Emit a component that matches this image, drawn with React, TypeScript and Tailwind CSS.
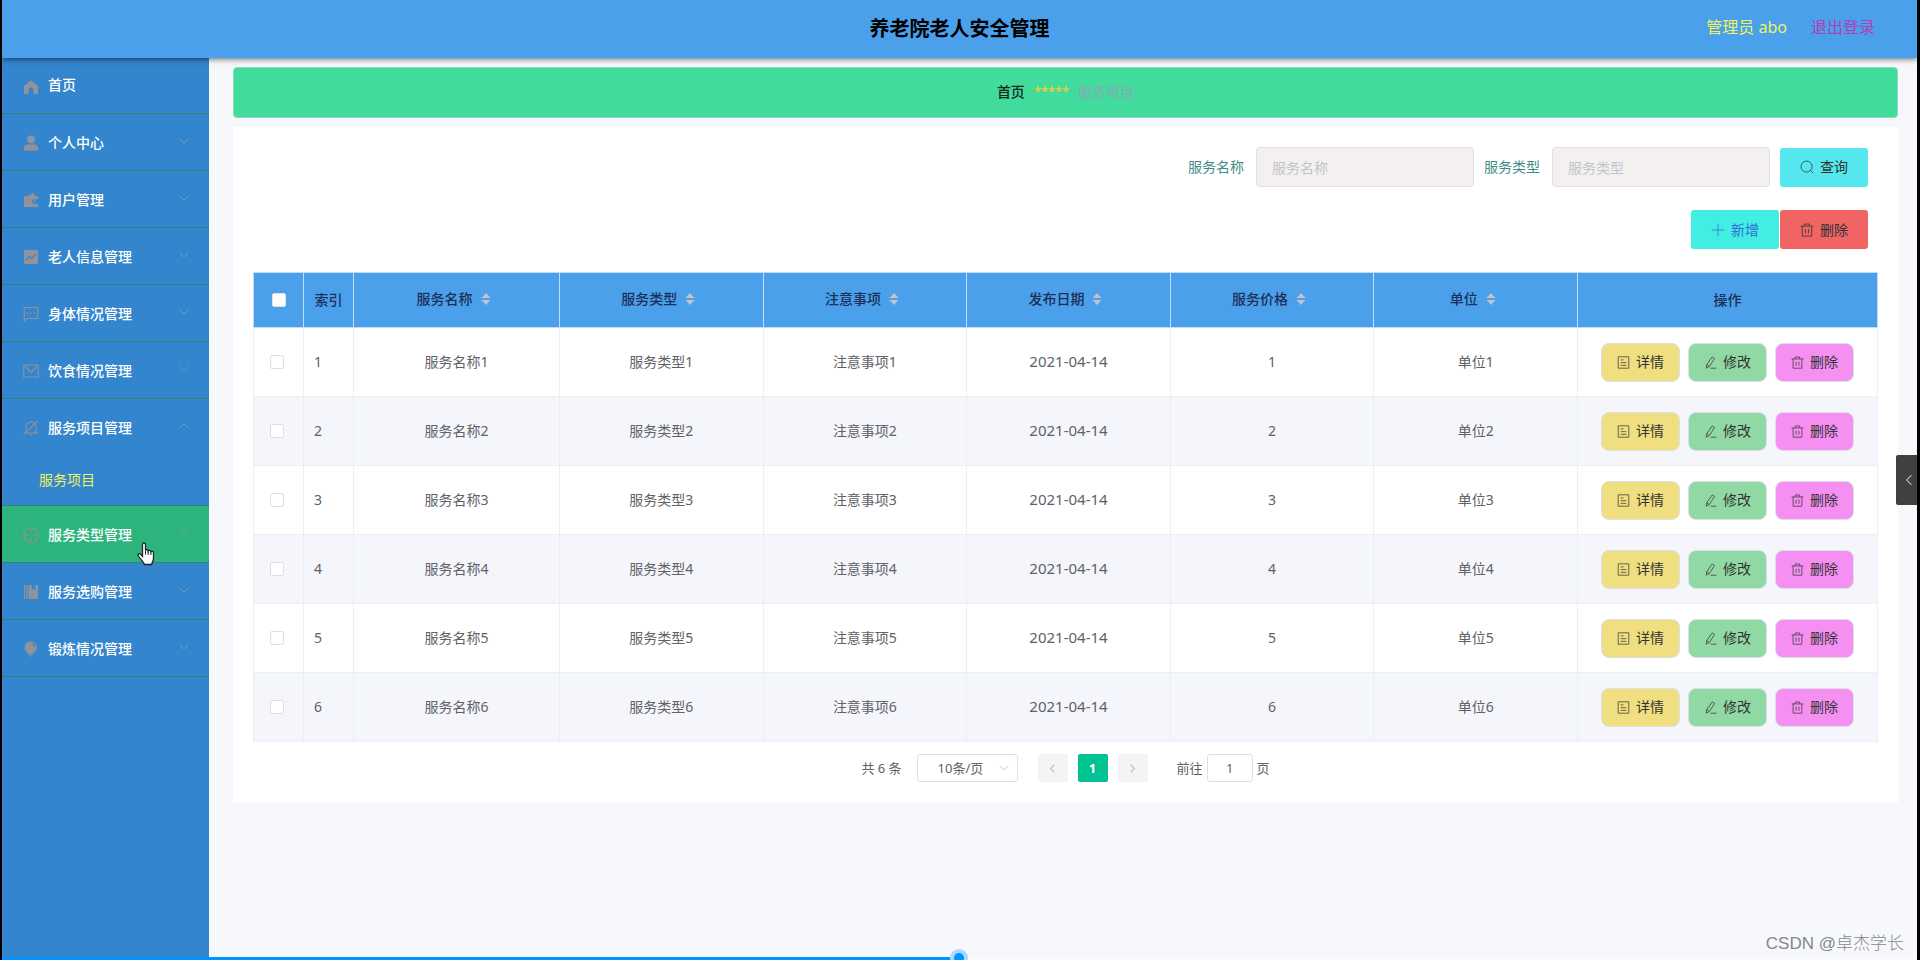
import { useState } from "react";

type TIcon = { name: string; className?: string };

type TMenu = {
  label: string;
  icon: string;
  open?: boolean;
  active?: boolean;
  children?: string[];
};

const menus: TMenu[] = [
  { label: "个人中心", icon: "user" },
  { label: "用户管理", icon: "wallet" },
  { label: "老人信息管理", icon: "data" },
  { label: "身体情况管理", icon: "chat" },
  { label: "饮食情况管理", icon: "message" },
  { label: "服务项目管理", icon: "bell", open: true, children: ["服务项目"] },
  { label: "服务类型管理", icon: "aim", active: true },
  { label: "服务选购管理", icon: "book" },
  { label: "锻炼情况管理", icon: "bulb" },
];

const columns = [
  "服务名称",
  "服务类型",
  "注意事项",
  "发布日期",
  "服务价格",
  "单位",
];

const rows = [1, 2, 3, 4, 5, 6].map((id) => ({
  id,
  cells: [
    `服务名称${id}`,
    `服务类型${id}`,
    `注意事项${id}`,
    "2021-04-14",
    `${id}`,
    `单位${id}`,
  ],
}));

const shapes: Record<string, React.ReactNode> = {
  home: (
    <path
      d="M8 1.2 15 7v8h-4.6v-4.2a2.4 2.4 0 0 0-4.8 0V15H1V7z"
      fill="currentColor"
      stroke="none"
    />
  ),
  user: (
    <g fill="currentColor" stroke="none">
      <circle cx="8" cy="4.6" r="4" />
      <path d="M1 15.5v-2.3A3.7 3.7 0 0 1 4.7 9.5h6.6a3.7 3.7 0 0 1 3.7 3.7v2.3z" />
    </g>
  ),
  wallet: (
    <g fill="currentColor" stroke="none">
      <path d="M5 4 10.4.8 12.4 4z" />
      <path d="M1 4h14v3.2h-3.4a2.4 2.4 0 0 0 0 4.8H15v3H1z" />
      <circle cx="11.8" cy="9.6" r="1" />
    </g>
  ),
  data: (
    <>
      <rect x="1" y="1" width="14" height="14" rx="1" fill="currentColor" stroke="none" />
      <path d="m3 11 3.2-3.6 2.4 2.2L13 4.8" className="stroke-[#3385cd]" />
    </>
  ),
  chat: (
    <>
      <path d="M1.2 15V1.5h13.6v11H4z" />
      <path d="M4.4 6.2v1.5M8 6.2v1.5M11.6 6.2v1.5" strokeWidth="1.4" />
    </>
  ),
  message: (
    <>
      <path d="M.8 2h14.4v12H.8z" />
      <path d="m2 3 6 6.4L14 3" />
    </>
  ),
  bell: (
    <>
      <path d="M3 13V7a5 5 0 0 1 10 0v6M.8 13h14.4M7 15.4h2M8 .4V2" />
      <path d="M14.6 1 1.4 14.2" />
    </>
  ),
  aim: (
    <>
      <circle cx="8" cy="8" r="7.3" />
      <path d="M8 .8v5M8 10.2v5M.8 8h5M10.2 8h5" />
    </>
  ),
  book: (
    <g fill="currentColor" stroke="none">
      <path d="M1 1h1.2v14H1zM3.4 1h1.4v14H3.4z" />
      <path d="M5.6 1h3.2v5.2l1.8-1.6 1.8 1.6V1H15v14H5.6z" />
    </g>
  ),
  bulb: (
    <g fill="currentColor" stroke="none">
      <path d="M7.5.5a6 6 0 0 1 6.3 6c0 2.6-1.5 4.2-3.1 5.3l-.6 1.4H5.2l-.6-1.4C3 10.7 1.4 9.1 1.4 6.5a6 6 0 0 1 6.1-6z" />
      <path d="M5.8 14.2h3.7L7.7 16z" />
      <path d="M8.5 2.5a4 4 0 0 1 3.3 3.3" fill="none" className="stroke-[#3385cd]" />
    </g>
  ),
  down: <path d="m2.5 5.3 5.5 5.4 5.5-5.4" />,
  up: <path d="m2.5 10.7 5.5-5.4 5.5 5.4" />,
  left: <path d="M10.7 2.5 5.3 8l5.4 5.5" />,
  right: <path d="M5.3 2.5 10.7 8l-5.4 5.5" />,
  search: (
    <>
      <circle cx="7.5" cy="7.5" r="6.3" />
      <path d="m12 12 3 3" />
    </>
  ),
  plus: <path d="M8 1v14M1 8h14" />,
  trash: (
    <>
      <path d="M.7 3.6h14.6M2.6 3.6V15h10.8V3.6M5.3 3.6V1.2h5.4v2.4" />
      <path d="M6.2 7v5M9.8 7v5" />
    </>
  ),
  detail: (
    <>
      <path d="M1.5 1h13v14h-13z" />
      <path d="M4.5 4.8h3.5M4.5 8.2h7M4.5 11.5h7" />
    </>
  ),
  edit: (
    <>
      <path d="m10 1.2 3 1.8-6.5 10-3.7 2 .4-4z" />
      <path d="m3.4 10.8 3 2M8 15h7.3" />
    </>
  ),
};

const Icon = ({ name, className }: TIcon) => (
  <svg
    viewBox="0 0 16 16"
    fill="none"
    stroke="currentColor"
    strokeWidth="1.1"
    aria-hidden="true"
    className={`shrink-0 ${className || "size-[14px] opacity-80"}`}
  >
    {shapes[name]}
  </svg>
);

const Header = () => (
  <header className="relative z-10 flex h-[58px] items-center bg-[#4aa0eb] px-[42px] shadow-[0_1px_6px_rgba(0,0,0,0.6)]">
    <div className="flex-1"></div>
    <h1 className="text-xl font-bold text-black">养老院老人安全管理</h1>
    <div className="flex flex-1 items-center justify-end gap-6 pb-1 text-base">
      <span className="text-[#eef263]">管理员 abo</span>
      <a href="#logout" className="text-[#b03fb5]">
        退出登录
      </a>
    </div>
  </header>
);

const Sidebar = () => (
  <nav className="w-[207px] shrink-0 bg-[#3385cd] text-sm font-medium text-white">
    <a
      href="#home"
      className="flex h-14 items-center gap-[9px] border-b border-[#3b7d78] pb-0.5 pl-[21px]"
    >
      <Icon name="home" className="mt-1 size-4 text-[#909399]" />
      <span>首页</span>
    </a>
    {menus.map((el) => (
      <div
        key={el.label}
        className={`border-b border-[#3b7d78] ${el.active ? "bg-[#2db47c]" : ""}`}
      >
        <button
          type="button"
          aria-expanded={!!el.open}
          className="flex h-14 w-full cursor-pointer items-center gap-[9px] pt-px pr-[19px] pl-[21px] text-left"
        >
          <Icon name={el.icon} className="mt-px size-4 text-[#909399]" />
          <span className="flex-1">{el.label}</span>
          <Icon
            name={el.open ? "up" : "down"}
            className="mb-1 size-3 text-[#8f9cab]"
          />
        </button>
        {el.children?.map((child) => (
          <a
            key={child}
            href="#service"
            className="flex h-[50px] items-center pl-[37px] font-normal text-[#eef263]"
          >
            {child}
          </a>
        ))}
      </div>
    ))}
  </nav>
);

const SearchField = ({ id, label }: { id: string; label: string }) => (
  <div className="flex items-center gap-3">
    <label htmlFor={id} className="text-[#3f8d88]">
      {label}
    </label>
    <input
      id={id}
      type="text"
      placeholder={label}
      className="h-10 w-[218px] rounded border border-[#e0dfe6] bg-[#f5f0f0] px-[15px] outline-none placeholder:text-[#c0c4cc]"
    />
  </div>
);

const SortCaret = () => (
  <svg viewBox="0 0 10 14" className="h-[14px] w-[10px]" aria-hidden="true">
    <path d="M5 1 9.5 6H.5zM5 13 .5 8h9z" fill="#c0c4cc" />
  </svg>
);

const checkboxClass =
  "block size-[14px] appearance-none rounded-xs border border-[#dcdfe6] bg-white";

const actionClass =
  "flex h-[39px] w-[79px] cursor-pointer items-center justify-center gap-[6px] rounded-lg border border-[#dcdfe6] text-[#333333]";

const toolClass =
  "flex h-[39px] w-[88px] cursor-pointer items-center justify-center gap-[6px] rounded-[3px]";

const ServiceTable = () => (
  <table className="w-full table-fixed border-collapse text-center text-sm text-[#606266]">
    <colgroup>
      <col className="w-[50px]" />
      <col className="w-[50px]" />
      <col className="w-[206px]" />
      <col />
      <col />
      <col />
      <col />
      <col />
      <col className="w-[300px]" />
    </colgroup>
    <thead>
      <tr className="h-[55px] bg-[#4aa0eb] text-[#1d2f57]">
        <th className="border border-[#c3def6] pl-[18px]">
          <input type="checkbox" aria-label="全选" className={checkboxClass} />
        </th>
        <th className="border border-[#c3def6] font-medium">索引</th>
        {columns.map((el) => (
          <th key={el} className="border border-[#c3def6] pb-0.5 font-medium">
            <span className="flex items-center justify-center gap-2 pr-[6px]">
              {el}
              <SortCaret />
            </span>
          </th>
        ))}
        <th className="border border-[#c3def6] font-medium">操作</th>
      </tr>
    </thead>
    <tbody>
      {rows.map((row) => (
        <tr key={row.id} className="h-[69px] even:bg-[#f5f5fc]">
          <td className="border border-[#ebeef5] pl-4">
            <input
              type="checkbox"
              aria-label={`选择${row.id}`}
              className={checkboxClass}
            />
          </td>
          <td className="border border-[#ebeef5] pl-[10px] text-left">
            {row.id}
          </td>
          {row.cells.map((cell, index) => (
            <td
              key={index}
              className={`border border-[#ebeef5] ${index === 3 ? "text-[15px]" : ""}`}
            >
              {cell}
            </td>
          ))}
          <td className="border border-[#ebeef5]">
            <div className="flex justify-center gap-2">
              <button type="button" className={`${actionClass} bg-[#f0df80]`}>
                <Icon name="detail" className="size-[13px] opacity-80" />
                详情
              </button>
              <button type="button" className={`${actionClass} bg-[#90d9a5]`}>
                <Icon name="edit" className="size-[13px] opacity-80" />
                修改
              </button>
              <button type="button" className={`${actionClass} bg-[#f58ff2]`}>
                <Icon name="trash" className="size-[13px] opacity-80" />
                删除
              </button>
            </div>
          </td>
        </tr>
      ))}
    </tbody>
  </table>
);

const Pagination = () => {
  const [page, setPage] = useState("1");
  return (
    <div className="mt-3 flex items-center justify-center text-[13px] text-[#606266]">
      <span className="mr-[15px]">共 6 条</span>
      <div className="relative mr-5">
        <select
          aria-label="每页条数"
          className="block h-7 w-[101px] appearance-none rounded-[3px] border border-[#dcdfe6] bg-white pl-5 outline-none"
        >
          <option>10条/页</option>
        </select>
        <Icon
          name="down"
          className="pointer-events-none absolute top-2 right-2 size-3 text-[#c0c4cc]"
        />
      </div>
      <button
        type="button"
        aria-label="上一页"
        className="flex h-7 w-[30px] items-center justify-center rounded-xs bg-[#f4f4f5] text-[#c0c4cc]"
      >
        <Icon name="left" className="size-[11px] stroke-2" />
      </button>
      <button
        type="button"
        className="mx-[10px] h-7 w-[30px] rounded-xs bg-[#00c292] font-bold text-white"
      >
        1
      </button>
      <button
        type="button"
        aria-label="下一页"
        className="flex h-7 w-[30px] items-center justify-center rounded-xs bg-[#f4f4f5] text-[#c0c4cc]"
      >
        <Icon name="right" className="size-[11px] stroke-2" />
      </button>
      <label className="ml-[29px] flex items-center gap-1">
        前往
        <input
          type="text"
          value={page}
          onChange={(e) => setPage(e.target.value)}
          className="h-7 w-[46px] rounded-[3px] border border-[#dcdfe6] text-center outline-none"
        />
        页
      </label>
    </div>
  );
};

const Cursor = () => (
  <svg
    viewBox="0 0 18 24"
    className="pointer-events-none absolute top-[542px] left-[135px] z-20 h-6 w-[18px]"
    aria-hidden="true"
  >
    <path
      d="M5.5 2.5c0-2 3-2 3 0v6c.5-1.2 2.6-1 2.7.5.7-1 2.6-.7 2.7.7.8-.7 2.6-.4 2.6 1.3v5c0 3-1.5 4-1.8 6.5H7.5C6.5 19.5 3 17 1.3 13.7c-.8-1.7 1.2-2.7 2.4-1.3l1.8 2z"
      fill="white"
      stroke="#222222"
      strokeWidth="1.3"
    />
    <path d="M8.5 8.5v4M11.2 9v4M13.9 10v3" stroke="#222222" />
  </svg>
);

const App = () => {
  return (
    <div className="relative flex min-h-screen flex-col overflow-hidden border-r-[3px] border-l-2 border-black bg-[#f6f8fc] font-['Noto_Sans','Noto_Sans_CJK_SC',sans-serif]">
      <Header />
      <div className="flex flex-1">
        <Sidebar />
        <main className="min-w-0 flex-1 pt-[9px] pr-[19px] pl-6 text-sm">
          <div className="flex h-[51px] items-center justify-center gap-[9px] rounded border border-[#8fdcbc] bg-[#41dc9b] pb-0.5">
            <a href="#home" className="font-medium text-[#17251f]">
              首页
            </a>
            <span className="text-[13px] font-bold text-[#d8cf4a]">*****</span>
            <span className="text-[#86a9b8]">服务项目</span>
          </div>
          <section className="mt-[9px] bg-white px-5 pt-5 pb-[21px]">
            <form className="flex items-center justify-end gap-[10px] pr-[10px]">
              <SearchField id="serviceName" label="服务名称" />
              <SearchField id="serviceType" label="服务类型" />
              <button
                type="button"
                className={`${toolClass} bg-[#54e8ee] text-[#333333]`}
              >
                <Icon name="search" />
                查询
              </button>
            </form>
            <div className="mt-[23px] flex justify-end gap-px pr-[10px]">
              <button
                type="button"
                className={`${toolClass} bg-[#42ede3] text-[#2f6fd0]`}
              >
                <Icon name="plus" />
                新增
              </button>
              <button
                type="button"
                className={`${toolClass} bg-[#f06464] text-[#333333]`}
              >
                <Icon name="trash" />
                删除
              </button>
            </div>
            <div className="mt-[23px]">
              <ServiceTable />
            </div>
            <Pagination />
          </section>
        </main>
      </div>
      <button
        type="button"
        aria-label="展开"
        className="absolute top-[455px] right-0 flex h-[50px] w-[21px] items-center justify-center rounded-l-xs bg-[#404040] pl-1 text-white"
      >
        <Icon name="left" className="size-[14px]" />
      </button>
      <Cursor />
      <div className="absolute right-[13px] bottom-1 font-['Liberation_Sans','Noto_Sans_CJK_SC',sans-serif] text-[17px] font-light text-[#85878a]">
        CSDN @卓杰学长
      </div>
      <div className="absolute inset-x-0 bottom-0 z-20 h-[3px] bg-[#fafafa]">
        <div className="relative h-full w-1/2 bg-[#0094ff]">
          <span className="absolute -top-2 -right-2 flex size-[18px] items-center justify-center rounded-full bg-[#a9d9ff]">
            <span className="size-[10px] rounded-full bg-[#0094ff]"></span>
          </span>
        </div>
      </div>
    </div>
  );
};

export default App;
